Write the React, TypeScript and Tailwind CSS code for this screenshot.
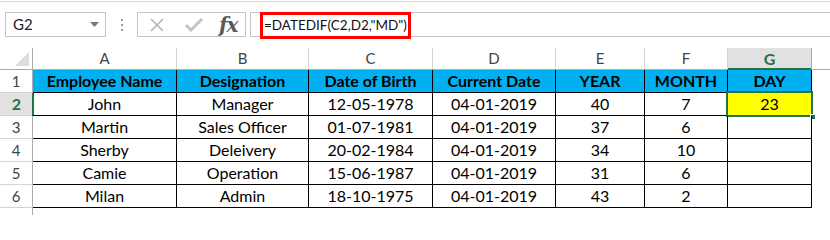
import React from "react";

const letters = ["A", "B", "C", "D", "E", "F", "G"];
const colW = [
  "w-[144px]",
  "w-[132px]",
  "w-[124px]",
  "w-[123px]",
  "w-[89px]",
  "w-[83px]",
  "w-[84px]",
];

const header = ["Employee Name", "Designation", "Date of Birth", "Current Date", "YEAR", "MONTH", "DAY"];
const rows = [
  ["John", "Manager", "12-05-1978", "04-01-2019", "40", "7", "23"],
  ["Martin", "Sales Officer", "01-07-1981", "04-01-2019", "37", "6", ""],
  ["Sherby", "Deleivery", "20-02-1984", "04-01-2019", "34", "10", ""],
  ["Camie", "Operation", "15-06-1987", "04-01-2019", "31", "6", ""],
  ["Milan", "Admin", "18-10-1975", "04-01-2019", "43", "2", ""],
];

export default function App() {
  return (
    <div className="w-[830px] h-[215px] overflow-hidden bg-white text-black font-['Lato',sans-serif]">
      {/* top line */}
      <div className="h-[1px]" />
      <div className="h-[1px] bg-[#d6d6d6]" />
      {/* formula bar */}
      <div className="flex h-[25px] mt-[10px] items-stretch">
        <div className="ml-[5px] w-[101px] border border-[#c6c6c6] flex items-center justify-between pl-[7px] pr-[6px] text-[15px] text-[#222]">
          <span>G2</span>
          <svg width="9" height="5" viewBox="0 0 9 5">
            <path d="M0 0 L9 0 L4.5 5 Z" fill="#777" />
          </svg>
        </div>
        <div className="w-[31px] flex flex-col items-center justify-center gap-[3px]">
          <div className="w-[2px] h-[2px] bg-[#9a9a9a]" />
          <div className="w-[2px] h-[2px] bg-[#9a9a9a]" />
          <div className="w-[2px] h-[2px] bg-[#9a9a9a]" />
        </div>
        <div className="w-[109px] border border-[#c6c6c6] flex items-center">
          <svg className="ml-[11px]" width="16" height="16" viewBox="0 0 16 16">
            <path d="M2 2 L14 14 M14 2 L2 14" stroke="#b4b4b4" strokeWidth="1.6" fill="none" />
          </svg>
          <svg className="ml-[20px]" width="18" height="15" viewBox="0 0 18 15">
            <path d="M1 8 L6 13 L17 2" stroke="#c4c4c4" strokeWidth="3" fill="none" />
          </svg>
          <span
            className="ml-[16px] text-[20px] italic font-bold text-[#5a5a5a] leading-none font-['DejaVu_Serif',serif] tracking-[-1px]"
          >
            fx
          </span>
        </div>
        <div className="ml-[4px] flex-1 border-y border-l border-[#c6c6c6] flex items-center pl-[9px]">
          <div className="h-[27px] mt-[1px] border-[3px] border-[#ff0000] flex items-center px-[1px] text-[13.5px] text-[#111] whitespace-nowrap">
            =DATEDIF(C2,D2,"MD")
          </div>
        </div>
      </div>
      <div className="h-[11px]" />
      {/* column headers */}
      <div className="flex h-[22px] border-b border-[#ababab]">
        <div className="w-[33px] border-r border-[#ababab] relative">
          <svg className="absolute right-[3px] bottom-[3px]" width="14" height="14" viewBox="0 0 14 14">
            <path d="M14 0 L14 14 L0 14 Z" fill="#dcdcdc" />
          </svg>
        </div>
        {letters.map((l, i) =>
          l === "G" ? (
            <div
              key={l}
              className={`${colW[i]} bg-[#e1e1e1] border-r border-[#ababab] flex items-center justify-center text-[16px] font-bold text-[#217346] relative`}
            >
              G
              <div className="absolute left-0 right-0 bottom-[-1px] h-[2px] bg-[#217346]" />
            </div>
          ) : (
            <div
              key={l}
              className={`${colW[i]} border-r border-[#d4d4d4] flex items-center justify-center text-[15px] text-[#444]`}
            >
              {l}
            </div>
          )
        )}
        <div className="flex-1" />
      </div>
      {/* header row */}
      <div className="flex h-[23px]">
        <div className="w-[33px] border-r border-b border-[#ababab] border-b-[#d4d4d4] flex items-center justify-center text-[15px] text-[#444]">
          1
        </div>
        {header.map((h, i) => (
          <div
            key={h}
            className={`${colW[i]} bg-[#00b0f0] border-r border-b border-black flex items-center justify-center text-[16px] font-bold`}
          >
            {h}
          </div>
        ))}
        <div className="flex-1" />
      </div>
      {rows.map((r, ri) => (
        <div key={ri} className="flex h-[23px]">
          {ri === 0 ? (
            <div className="w-[33px] bg-[#e1e1e1] border-b border-b-[#d4d4d4] flex items-center justify-center text-[16px] font-bold text-[#217346] relative">
              2
              <div className="absolute top-0 bottom-[-1px] right-[-1px] w-[2px] bg-[#217346]" />
            </div>
          ) : (
            <div className="w-[33px] border-r border-b border-[#ababab] border-b-[#d4d4d4] flex items-center justify-center text-[15px] text-[#444]">
              {ri + 2}
            </div>
          )}
          {r.map((c, ci) => {
            const sel = ri === 0 && ci === 6;
            return (
              <div
                key={ci}
                className={`${colW[ci]} ${sel ? "bg-[#ffff00]" : ""} border-r border-b border-black flex items-center justify-center text-[16px] relative`}
              >
                {c}
                {sel && (
                  <>
                    <div className="absolute left-[-2px] top-[-2px] right-[-2px] bottom-[-2px] border-2 border-[#217346]" />
                    <div className="absolute right-[-5px] bottom-[-5px] w-[6px] h-[6px] bg-[#217346] border border-white" />
                  </>
                )}
              </div>
            );
          })}
          <div className="flex-1" />
        </div>
      ))}
      <div className="flex h-[23px]">
        <div className="w-[33px] border-r border-[#ababab]" />
      </div>
    </div>
  );
}
